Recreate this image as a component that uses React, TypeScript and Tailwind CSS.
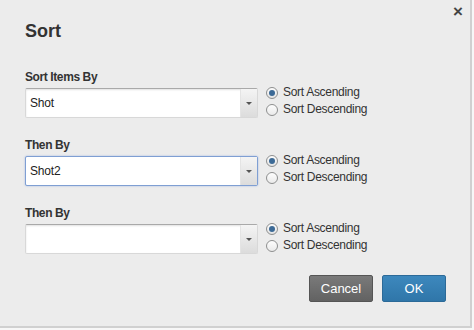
const SortRow = ({
  label,
  value,
  focused,
}: {
  label: string;
  value: string;
  focused?: boolean;
}) => {
  return (
    <div className="flex flex-col">
      <p className="text-[12px] font-bold text-[#333] leading-[16px] mb-[3px] tracking-[-0.4px]">{label}</p>
      <div className="flex items-start">
        <div
          className={
            focused
              ? "flex w-[233px] h-[30px] bg-white border border-[#7f9fd3] rounded-[2px] shadow-[0_0_2px_#9db4e0]"
              : "flex w-[233px] h-[30px] bg-white border border-[#d8d8d8] border-t-[#a9a9a9] rounded-[2px] shadow-[inset_0_1px_2px_rgba(0,0,0,0.12)]"
          }
        >
          <div className="flex-1 flex items-center pl-[4px] text-[12px] text-[#222] tracking-[-0.2px]">{value}</div>
          <div className="w-[17px] flex items-center justify-center bg-gradient-to-b from-[#f4f4f4] to-[#dcdcdc] border-l border-[#e4e4e4]">
            <div className="w-0 h-0 border-l-[3px] border-r-[3px] border-t-[3px] border-l-transparent border-r-transparent border-t-[#555]" />
          </div>
        </div>
        <div className="flex flex-col ml-[8px] -mt-[4px] text-[12px] text-[#333] leading-[17px] tracking-[-0.3px]">
          <label className="flex items-center gap-[5px]">
            <span className="w-[12px] h-[12px] rounded-full border border-[#8e8f8f] bg-gradient-to-b from-[#fdfdfd] to-[#e3e3e3] flex items-center justify-center">
              <span className="w-[6px] h-[6px] rounded-full bg-[#3c6a96]" />
            </span>
            <span>Sort Ascending</span>
          </label>
          <label className="flex items-center gap-[5px]">
            <span className="w-[12px] h-[12px] rounded-full border border-[#8e8f8f] bg-gradient-to-b from-[#fdfdfd] to-[#eaeaea]" />
            <span>Sort Descending</span>
          </label>
        </div>
      </div>
    </div>
  );
};

export default function App() {
  return (
    <div className="w-[474px] h-[330px] bg-[#f7f7f7]" style={{ fontFamily: '"Liberation Sans", Arial, sans-serif' }}>
      <div className="relative w-[472px] h-[328px] bg-[#ececec] border-r-2 border-b-2 border-[#d0d0d0] flex flex-col pl-[25px]">
        <button className="absolute right-[7px] top-[3px] text-[17px] font-bold text-[#444] leading-none">×</button>
        <h1 className="mt-[20px] text-[18px] font-bold text-[#333] leading-[22px]">Sort</h1>
        <div className="mt-[27px] flex flex-col gap-[19px]">
          <SortRow label="Sort Items By" value="Shot" />
          <SortRow label="Then By" value="Shot2" focused />
          <SortRow label="Then By" value="" />
        </div>
        <div className="flex justify-end gap-[9px] mt-[21px] pr-[24px]">
          <button className="w-[64px] h-[27px] rounded-[2px] bg-gradient-to-b from-[#7a7a7a] to-[#626262] border border-[#555] text-[13px] text-white">
            Cancel
          </button>
          <button className="w-[64px] h-[27px] rounded-[2px] bg-gradient-to-b from-[#3d88bd] to-[#2f76a9] border border-[#2c6a98] text-[13px] text-white">
            OK
          </button>
        </div>
      </div>
    </div>
  );
}
